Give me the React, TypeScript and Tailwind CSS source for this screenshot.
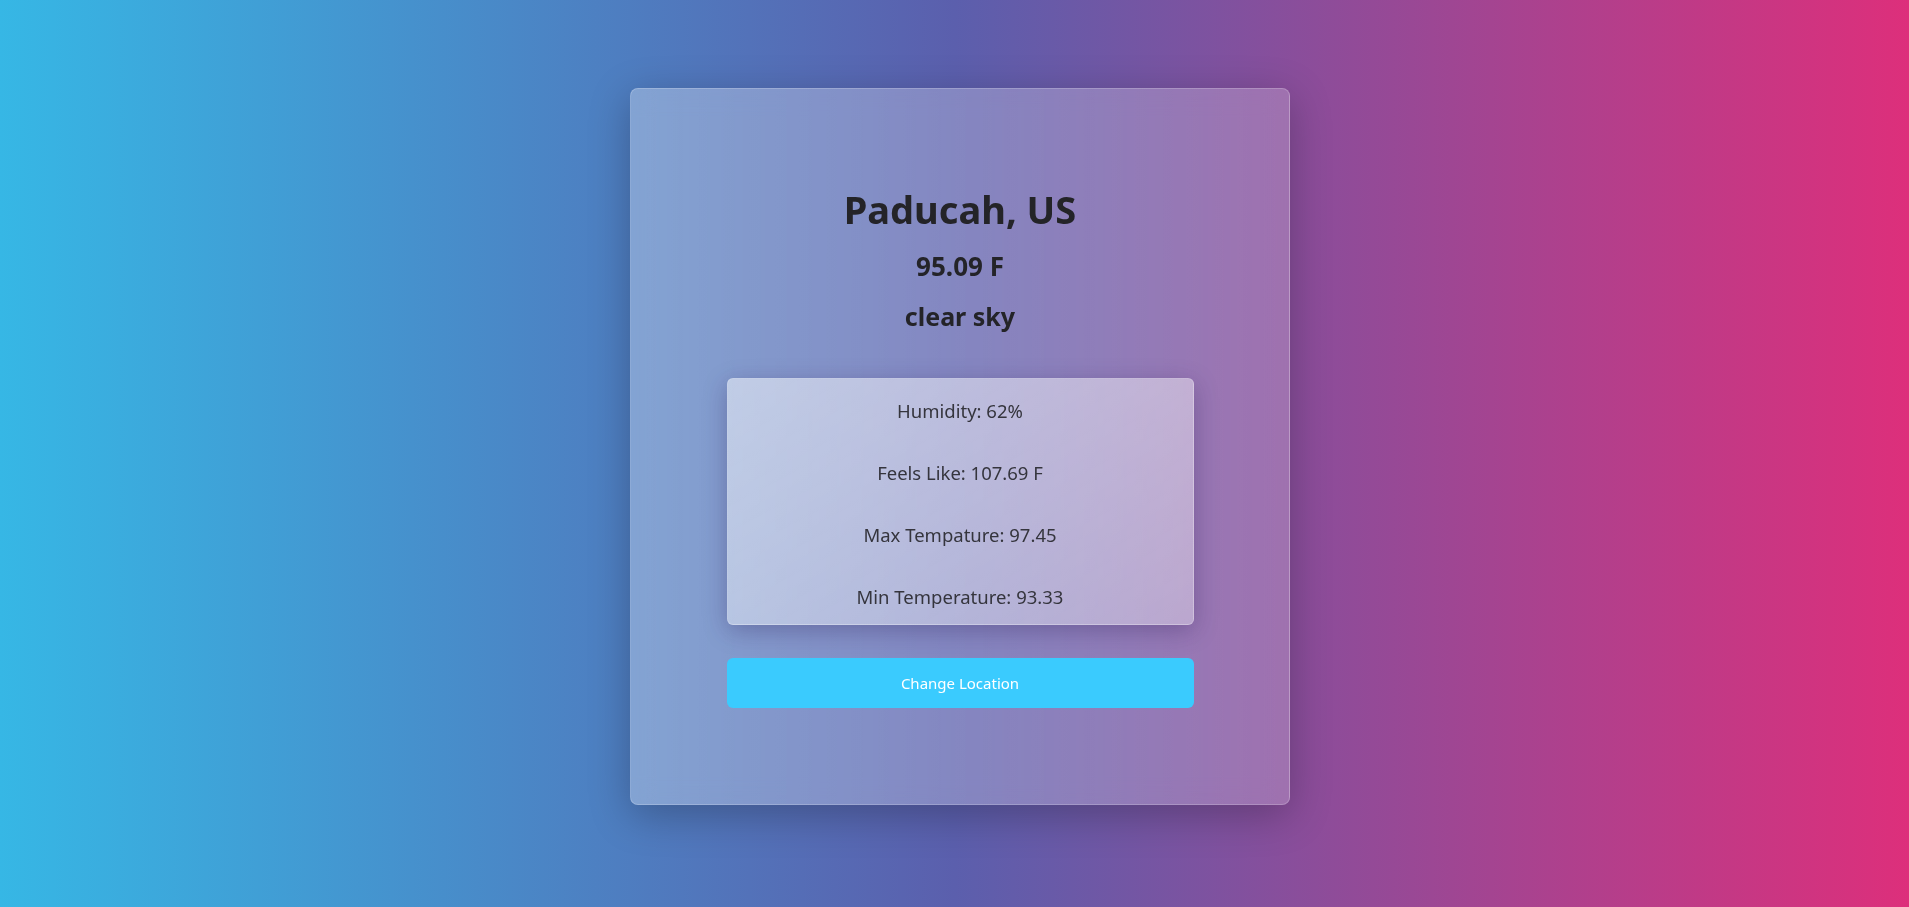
import React from 'react';

interface WeatherData {
    city: string;
    country: string;
    temp: number;
    description: string;
    humidity: number;
    feelsLike: number;
    tempMax: number;
    tempMin: number;
}

const weather: WeatherData = {
    city: 'Paducah',
    country: 'US',
    temp: 95.09,
    description: 'clear sky',
    humidity: 62,
    feelsLike: 107.69,
    tempMax: 97.45,
    tempMin: 93.33,
};

export default function App() {
    const details = [
        `Humidity: ${weather.humidity}%`,
        `Feels Like: ${weather.feelsLike} F`,
        `Max Tempature: ${weather.tempMax}`,
        `Min Temperature: ${weather.tempMin}`,
    ];

    return (
        <div className="min-h-screen w-full bg-[linear-gradient(to_right,#36b7e5_0%,#5b5fad_50%,#dd2f7b_100%)] font-['Segoe_UI','Noto_Sans',sans-serif] flex justify-center pt-[88px] pl-[11px]">
            {/* CARD */}
            <div className="w-[660px] h-[717px] rounded-lg border border-white/20 bg-gradient-to-r from-white/30 to-white/20 backdrop-blur-md shadow-[0_10px_40px_rgba(0,0,0,0.25)] flex flex-col items-center pt-[96px]">
                <h1 className="text-[38px] leading-[48px] font-bold text-[#242428]">
                    {weather.city}, {weather.country}
                </h1>
                <h2 className="mt-[17px] text-[26px] leading-[32px] font-bold text-[#242428]">
                    {weather.temp} F
                </h2>
                <h3 className="mt-[18px] text-[25px] leading-[32px] font-bold text-[#242428]">
                    {weather.description}
                </h3>

                {/* DETAILS */}
                <div className="mt-[46px] w-[467px] h-[247px] rounded-md border border-white/20 bg-gradient-to-br from-white/50 to-white/35 shadow-[0_6px_24px_rgba(40,20,80,0.3)] flex flex-col items-center pt-[18px] gap-[34px]">
                    {details.map((line) => (
                        <p key={line} className="text-[18.5px] leading-[28px] text-[#35353d]">
                            {line}
                        </p>
                    ))}
                </div>

                <button className="mt-[33px] w-[467px] h-[50px] rounded-md bg-[#3acbfe] text-white text-[15px] cursor-pointer">
                    Change Location
                </button>
            </div>
        </div>
    );
}
